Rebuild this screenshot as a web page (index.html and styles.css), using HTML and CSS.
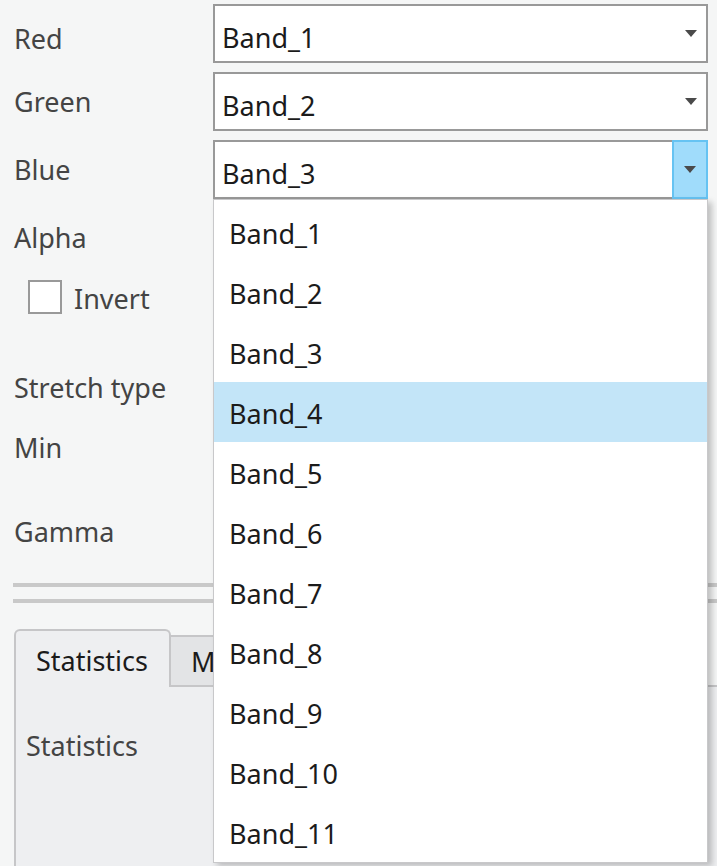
FILE: index.html
```html
<!DOCTYPE html>
<html lang="en">
<head>
  <meta charset="UTF-8" />
  <title>RGB Symbology</title>
  <link rel="stylesheet" href="styles.css">
</head>
<body>
  <div class="pane">
    <div class="row first">
      <span class="label">Red</span>
      <div class="combo">Band_1<span class="arrow"></span></div>
    </div>
    <div class="row">
      <span class="label">Green</span>
      <div class="combo">Band_2<span class="arrow"></span></div>
    </div>
    <div class="row">
      <span class="label">Blue</span>
      <div class="combo open">
        Band_3
        <span class="arrow-btn"><span class="arrow"></span></span>
        <ul class="dropdown">
          <li>Band_1</li>
          <li>Band_2</li>
          <li>Band_3</li>
          <li class="hover">Band_4</li>
          <li>Band_5</li>
          <li>Band_6</li>
          <li>Band_7</li>
          <li>Band_8</li>
          <li>Band_9</li>
          <li>Band_10</li>
          <li>Band_11</li>
        </ul>
      </div>
    </div>

    <div class="field alpha"><span class="label">Alpha</span></div>
    <div class="field invert">
      <span class="checkbox"></span>
      <span class="label">Invert</span>
    </div>
    <div class="field stretch"><span class="label">Stretch type</span></div>
    <div class="field min"><span class="label">Min</span></div>
    <div class="field gamma"><span class="label">Gamma</span></div>

    <div class="sep"></div>
    <div class="sep second"></div>

    <div class="tabs">
      <div class="tab active">Statistics</div>
      <div class="tab">Mask</div>
      <div class="tab-rest"></div>
    </div>
    <div class="tab-panel">
      <span class="label">Statistics</span>
    </div>
  </div>
</body>
</html>
```

FILE: styles.css
```css
body {
  margin: 0;
  background-color: #f5f6f6;
  font-family: "Noto Sans", "Open Sans", sans-serif;
  font-size: 27px;
  overflow: hidden;
}
.pane {
  padding-top: 4px;
  height: 862px;
  display: flex;
  flex-direction: column;
}
.label {
  color: #444;
}
.row {
  display: grid;
  grid-template-columns: 199px 1fr;
  align-items: center;
  height: 59px;
  margin: 0 9px 9px 14px;
}
.row.first .label {
  padding-top: 9px;
}
.combo {
  position: relative;
  box-sizing: border-box;
  height: 59px;
  border: 2px solid #999;
  background-color: #fff;
  color: #1b1b1b;
  display: flex;
  align-items: center;
  padding: 7px 0 0 7px;
}
.arrow {
  position: absolute;
  right: 9px;
  top: 50%;
  margin-top: -4px;
  width: 0;
  height: 0;
  border-left: 6px solid transparent;
  border-right: 6px solid transparent;
  border-top: 7px solid #4a4a4a;
}
.arrow-btn {
  position: absolute;
  top: -2px;
  right: -2px;
  bottom: -2px;
  width: 32px;
  border: 2px solid #66c3f2;
  background-color: #a0dcfb;
}
.arrow-btn .arrow {
  right: 10px;
}
.dropdown {
  position: absolute;
  top: 57px;
  left: -2px;
  width: 495px;
  height: 664px;
  box-sizing: border-box;
  margin: 0;
  padding: 2px 0 0;
  list-style: none;
  background-color: #fff;
  border: 1px solid #c8c8ca;
  box-shadow: 4px 3px 6px rgba(0, 0, 0, 0.22);
  z-index: 10;
}
.dropdown li {
  height: 60px;
  line-height: 60px;
  padding: 2px 0 0 15px;
  box-sizing: border-box;
  color: #1b1b1b;
}
.dropdown li.hover {
  background-color: #c3e5f8;
}
.field {
  display: flex;
  align-items: center;
  margin-left: 14px;
}
.alpha {
  height: 59px;
}
.invert {
  height: 60px;
  margin-left: 28px;
}
.checkbox {
  width: 30px;
  height: 30px;
  border: 2px solid #999;
  background-color: #fff;
  margin-right: 12px;
}
.invert .label {
  padding-top: 3px;
}
.stretch {
  height: 60px;
  margin-top: 30px;
}
.min {
  height: 60px;
}
.gamma {
  height: 60px;
  margin-top: 24px;
}
.sep {
  height: 4px;
  margin: 22px 0 0 13px;
  background-color: #c9c9c9;
}
.sep.second {
  margin-top: 12px;
}
.tabs {
  display: flex;
  align-items: flex-end;
  margin: 26px 0 0 14px;
}
.tab {
  box-sizing: border-box;
  height: 52px;
  padding: 0 20px;
  display: flex;
  align-items: center;
  color: #1b1b1b;
  background-color: #e3e4e6;
  border-top: 2px solid #c6c6c8;
  border-right: 2px solid #c6c6c8;
  border-bottom: 2px solid #c6c6c8;
}
.tab.active {
  height: 58px;
  width: 157px;
  padding: 2px 0 0 20px;
  background-color: #eeeff1;
  border: 2px solid #c6c6c8;
  border-bottom: none;
  border-radius: 6px 6px 0 0;
}
.tab-rest {
  flex: 1;
  border-bottom: 2px solid #c6c6c8;
}
.tab-panel {
  flex: 1;
  margin-left: 14px;
  padding: 40px 0 0 10px;
  background-color: #eeeff1;
  border-left: 2px solid #c6c6c8;
}
```
